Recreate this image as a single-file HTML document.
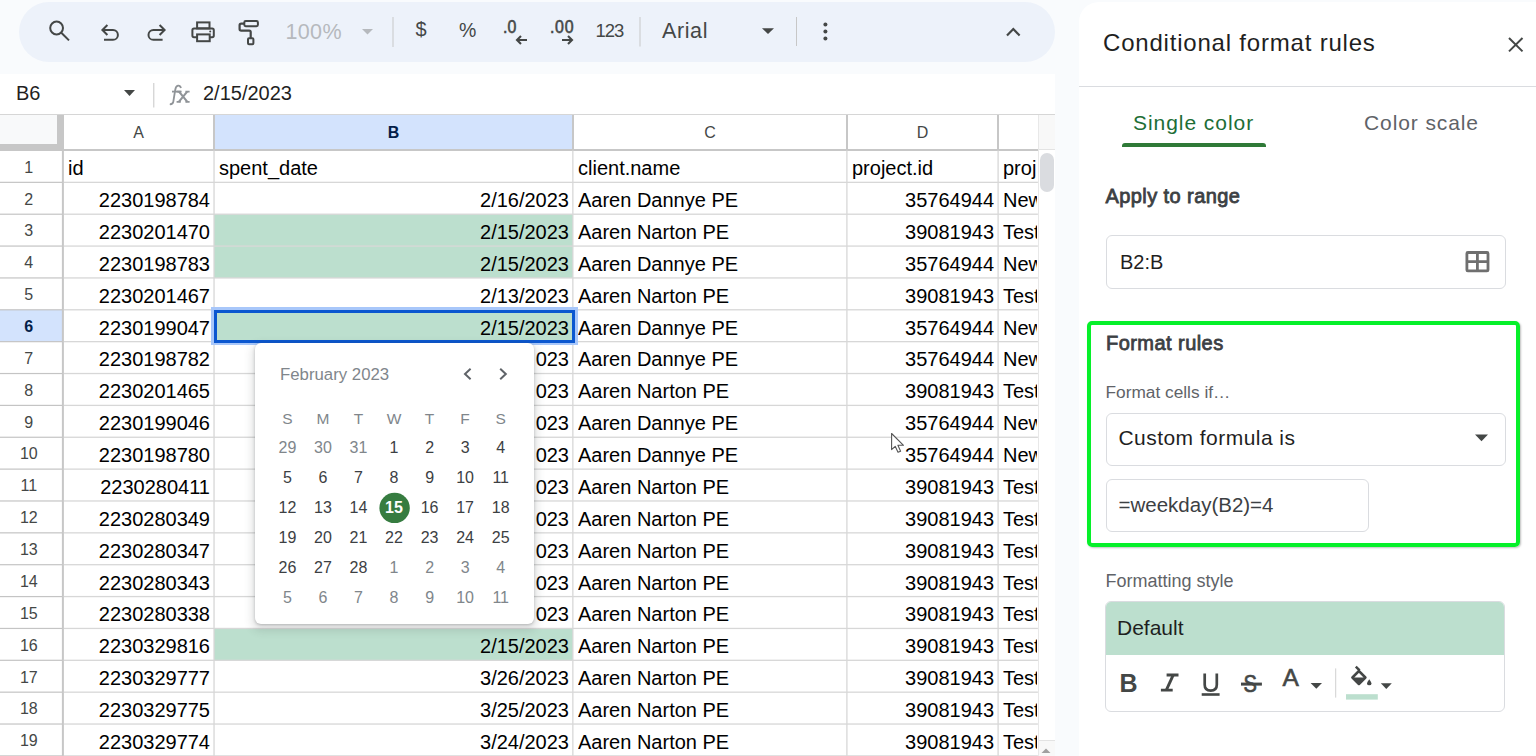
<!DOCTYPE html>
<html><head><meta charset="utf-8"><style>
*{box-sizing:border-box;margin:0;padding:0}
html,body{width:1536px;height:756px;overflow:hidden;background:#f9fbfd;font-family:"Liberation Sans",sans-serif;position:relative}
.a{position:absolute}
.t{position:absolute;white-space:nowrap;line-height:1}
.c{position:absolute;font-size:20px;color:#000;white-space:nowrap;overflow:hidden;line-height:26px;height:26px}
.rn{position:absolute;left:0;width:57.6px;text-align:center;font-size:16px;color:#444746;line-height:16px}
svg{position:absolute;left:0;top:0}
</style></head><body>

<div class="a" style="left:19px;top:2px;width:1036px;height:60px;border-radius:30px;background:#edf2fa"></div>
<div class="a" style="left:0;top:74px;width:1055px;height:41px;background:#fff"></div>
<div class="a" style="left:0;top:115px;width:1038px;height:641px;background:#fff"></div>
<div class="a" style="left:1038px;top:115px;width:17px;height:641px;background:#fff;border-left:1px solid #e8e8e8"></div>
<div class="a" style="left:1039px;top:115px;width:16px;height:35px;background:#f8f8f8;border-bottom:1px solid #e3e3e3"></div>
<div class="a" style="left:1040px;top:153px;width:14px;height:39px;border-radius:7px;background:#dadce0"></div>
<div class="a" style="left:1039px;top:740px;width:16px;height:16px;background:#f8f8f8;border-top:1px solid #e3e3e3"></div>
<svg width="1536" height="756"><polygon points="1041.5,753 1050.5,753 1046,748.5" fill="#a0a0a0"/></svg>
<div class="a" style="left:214px;top:115px;width:359px;height:35px;background:#d3e3fd"></div>
<div class="a" style="left:0;top:115px;width:64px;height:36px;background:#c7c7c7"></div>
<div class="a" style="left:0;top:115px;width:57px;height:29px;background:#f8f9fa"></div>
<div class="a" style="left:0;top:114px;width:1055px;height:1px;background:#d6d6d6"></div>
<div class="a" style="left:64px;top:149px;width:974px;height:2px;background:#c7c7c7"></div>
<div class="a" style="left:213px;top:115px;width:2px;height:35px;background:#c7c7c7"></div>
<div class="a" style="left:572px;top:115px;width:2px;height:35px;background:#c7c7c7"></div>
<div class="a" style="left:846px;top:115px;width:2px;height:35px;background:#c7c7c7"></div>
<div class="a" style="left:997px;top:115px;width:2px;height:35px;background:#c7c7c7"></div>
<div class="t" style="left:63px;width:151px;top:125px;text-align:center;font-size:16px;color:#444746">A</div>
<div class="t" style="left:214px;width:359px;top:125px;text-align:center;font-size:16px;font-weight:bold;color:#041e49">B</div>
<div class="t" style="left:573px;width:274px;top:125px;text-align:center;font-size:16px;color:#444746">C</div>
<div class="t" style="left:847px;width:151px;top:125px;text-align:center;font-size:16px;color:#444746">D</div>
<svg width="1100" height="756" shape-rendering="geometricPrecision"><rect x="214" y="628.44" width="359" height="31.86" fill="#bcdfce"/></svg>
<svg width="1100" height="756" shape-rendering="geometricPrecision"><rect x="214" y="214.21" width="359" height="31.86" fill="#bcdfce"/></svg>
<svg width="1100" height="756" shape-rendering="geometricPrecision"><rect x="214" y="246.07" width="359" height="31.86" fill="#bcdfce"/></svg>
<svg width="1100" height="756" shape-rendering="geometricPrecision"><rect x="214" y="309.80" width="359" height="31.86" fill="#bcdfce"/></svg>
<svg width="1100" height="756" shape-rendering="geometricPrecision"><rect x="0" y="309.80" width="62" height="31.864" fill="#d3e3fd"/></svg>
<svg width="1100" height="756" shape-rendering="geometricPrecision"><rect x="0" y="181.74" width="62" height="1.2" fill="#c4c4c4"/><rect x="63.9" y="181.69" width="974" height="1.3" fill="#d7d7d7"/><rect x="0" y="213.61" width="62" height="1.2" fill="#c4c4c4"/><rect x="63.9" y="213.56" width="974" height="1.3" fill="#d7d7d7"/><rect x="0" y="245.47" width="62" height="1.2" fill="#c4c4c4"/><rect x="63.9" y="245.42" width="974" height="1.3" fill="#d7d7d7"/><rect x="0" y="277.34" width="62" height="1.2" fill="#c4c4c4"/><rect x="63.9" y="277.29" width="974" height="1.3" fill="#d7d7d7"/><rect x="0" y="309.20" width="62" height="1.2" fill="#c4c4c4"/><rect x="63.9" y="309.15" width="974" height="1.3" fill="#d7d7d7"/><rect x="0" y="341.06" width="62" height="1.2" fill="#c4c4c4"/><rect x="63.9" y="341.01" width="974" height="1.3" fill="#d7d7d7"/><rect x="0" y="372.93" width="62" height="1.2" fill="#c4c4c4"/><rect x="63.9" y="372.88" width="974" height="1.3" fill="#d7d7d7"/><rect x="0" y="404.79" width="62" height="1.2" fill="#c4c4c4"/><rect x="63.9" y="404.74" width="974" height="1.3" fill="#d7d7d7"/><rect x="0" y="436.66" width="62" height="1.2" fill="#c4c4c4"/><rect x="63.9" y="436.61" width="974" height="1.3" fill="#d7d7d7"/><rect x="0" y="468.52" width="62" height="1.2" fill="#c4c4c4"/><rect x="63.9" y="468.47" width="974" height="1.3" fill="#d7d7d7"/><rect x="0" y="500.38" width="62" height="1.2" fill="#c4c4c4"/><rect x="63.9" y="500.33" width="974" height="1.3" fill="#d7d7d7"/><rect x="0" y="532.25" width="62" height="1.2" fill="#c4c4c4"/><rect x="63.9" y="532.20" width="974" height="1.3" fill="#d7d7d7"/><rect x="0" y="564.11" width="62" height="1.2" fill="#c4c4c4"/><rect x="63.9" y="564.06" width="974" height="1.3" fill="#d7d7d7"/><rect x="0" y="595.98" width="62" height="1.2" fill="#c4c4c4"/><rect x="63.9" y="595.93" width="974" height="1.3" fill="#d7d7d7"/><rect x="0" y="627.84" width="62" height="1.2" fill="#c4c4c4"/><rect x="63.9" y="627.79" width="974" height="1.3" fill="#d7d7d7"/><rect x="0" y="659.70" width="62" height="1.2" fill="#c4c4c4"/><rect x="63.9" y="659.65" width="974" height="1.3" fill="#d7d7d7"/><rect x="0" y="691.57" width="62" height="1.2" fill="#c4c4c4"/><rect x="63.9" y="691.52" width="974" height="1.3" fill="#d7d7d7"/><rect x="0" y="723.43" width="62" height="1.2" fill="#c4c4c4"/><rect x="63.9" y="723.38" width="974" height="1.3" fill="#d7d7d7"/><rect x="0" y="755.30" width="62" height="1.2" fill="#c4c4c4"/><rect x="63.9" y="755.25" width="974" height="1.3" fill="#d7d7d7"/><rect x="61.9" y="150.5" width="2" height="606" fill="#c7c7c7"/><rect x="213.39" y="150.5" width="1.3" height="606" fill="#d7d7d7"/><rect x="572.20" y="150.5" width="1.3" height="606" fill="#d7d7d7"/><rect x="846.25" y="150.5" width="1.3" height="606" fill="#d7d7d7"/><rect x="997.45" y="150.5" width="1.3" height="606" fill="#d7d7d7"/></svg>
<div class="rn" style="top:159.68px">1</div>
<div class="c" style="left:68px;top:155.28px;width:145px">id</div>
<div class="c" style="left:219px;top:155.28px;width:353px">spent_date</div>
<div class="c" style="left:578px;top:155.28px;width:268px">client.name</div>
<div class="c" style="left:852px;top:155.28px;width:145px">project.id</div>
<div class="c" style="left:1003px;top:155.28px;width:34px">proj</div>
<div class="rn" style="top:191.54px">2</div>
<div class="c" style="left:63px;top:187.14px;width:147px;text-align:right">2230198784</div>
<div class="c" style="left:214px;top:187.14px;width:355px;text-align:right">2/16/2023</div>
<div class="c" style="left:578px;top:187.14px;width:268px">Aaren Dannye PE</div>
<div class="c" style="left:847px;top:187.14px;width:147px;text-align:right">35764944</div>
<div class="c" style="left:1003px;top:187.14px;width:34px">New</div>
<div class="rn" style="top:223.41px">3</div>
<div class="c" style="left:63px;top:219.01px;width:147px;text-align:right">2230201470</div>
<div class="c" style="left:214px;top:219.01px;width:355px;text-align:right">2/15/2023</div>
<div class="c" style="left:578px;top:219.01px;width:268px">Aaren Narton PE</div>
<div class="c" style="left:847px;top:219.01px;width:147px;text-align:right">39081943</div>
<div class="c" style="left:1003px;top:219.01px;width:34px">Test</div>
<div class="rn" style="top:255.27px">4</div>
<div class="c" style="left:63px;top:250.87px;width:147px;text-align:right">2230198783</div>
<div class="c" style="left:214px;top:250.87px;width:355px;text-align:right">2/15/2023</div>
<div class="c" style="left:578px;top:250.87px;width:268px">Aaren Dannye PE</div>
<div class="c" style="left:847px;top:250.87px;width:147px;text-align:right">35764944</div>
<div class="c" style="left:1003px;top:250.87px;width:34px">New</div>
<div class="rn" style="top:287.14px">5</div>
<div class="c" style="left:63px;top:282.74px;width:147px;text-align:right">2230201467</div>
<div class="c" style="left:214px;top:282.74px;width:355px;text-align:right">2/13/2023</div>
<div class="c" style="left:578px;top:282.74px;width:268px">Aaren Narton PE</div>
<div class="c" style="left:847px;top:282.74px;width:147px;text-align:right">39081943</div>
<div class="c" style="left:1003px;top:282.74px;width:34px">Test</div>
<div class="rn" style="top:319.00px;font-weight:bold;color:#041e49">6</div>
<div class="c" style="left:63px;top:314.60px;width:147px;text-align:right">2230199047</div>
<div class="c" style="left:214px;top:314.60px;width:355px;text-align:right">2/15/2023</div>
<div class="c" style="left:578px;top:314.60px;width:268px">Aaren Dannye PE</div>
<div class="c" style="left:847px;top:314.60px;width:147px;text-align:right">35764944</div>
<div class="c" style="left:1003px;top:314.60px;width:34px">New</div>
<div class="rn" style="top:350.86px">7</div>
<div class="c" style="left:63px;top:346.46px;width:147px;text-align:right">2230198782</div>
<div class="c" style="left:214px;top:346.46px;width:355px;text-align:right">023</div>
<div class="c" style="left:578px;top:346.46px;width:268px">Aaren Dannye PE</div>
<div class="c" style="left:847px;top:346.46px;width:147px;text-align:right">35764944</div>
<div class="c" style="left:1003px;top:346.46px;width:34px">New</div>
<div class="rn" style="top:382.73px">8</div>
<div class="c" style="left:63px;top:378.33px;width:147px;text-align:right">2230201465</div>
<div class="c" style="left:214px;top:378.33px;width:355px;text-align:right">023</div>
<div class="c" style="left:578px;top:378.33px;width:268px">Aaren Narton PE</div>
<div class="c" style="left:847px;top:378.33px;width:147px;text-align:right">39081943</div>
<div class="c" style="left:1003px;top:378.33px;width:34px">Test</div>
<div class="rn" style="top:414.59px">9</div>
<div class="c" style="left:63px;top:410.19px;width:147px;text-align:right">2230199046</div>
<div class="c" style="left:214px;top:410.19px;width:355px;text-align:right">023</div>
<div class="c" style="left:578px;top:410.19px;width:268px">Aaren Dannye PE</div>
<div class="c" style="left:847px;top:410.19px;width:147px;text-align:right">35764944</div>
<div class="c" style="left:1003px;top:410.19px;width:34px">New</div>
<div class="rn" style="top:446.46px">10</div>
<div class="c" style="left:63px;top:442.06px;width:147px;text-align:right">2230198780</div>
<div class="c" style="left:214px;top:442.06px;width:355px;text-align:right">023</div>
<div class="c" style="left:578px;top:442.06px;width:268px">Aaren Dannye PE</div>
<div class="c" style="left:847px;top:442.06px;width:147px;text-align:right">35764944</div>
<div class="c" style="left:1003px;top:442.06px;width:34px">New</div>
<div class="rn" style="top:478.32px">11</div>
<div class="c" style="left:63px;top:473.92px;width:147px;text-align:right">2230280411</div>
<div class="c" style="left:214px;top:473.92px;width:355px;text-align:right">023</div>
<div class="c" style="left:578px;top:473.92px;width:268px">Aaren Narton PE</div>
<div class="c" style="left:847px;top:473.92px;width:147px;text-align:right">39081943</div>
<div class="c" style="left:1003px;top:473.92px;width:34px">Test</div>
<div class="rn" style="top:510.18px">12</div>
<div class="c" style="left:63px;top:505.78px;width:147px;text-align:right">2230280349</div>
<div class="c" style="left:214px;top:505.78px;width:355px;text-align:right">023</div>
<div class="c" style="left:578px;top:505.78px;width:268px">Aaren Narton PE</div>
<div class="c" style="left:847px;top:505.78px;width:147px;text-align:right">39081943</div>
<div class="c" style="left:1003px;top:505.78px;width:34px">Test</div>
<div class="rn" style="top:542.05px">13</div>
<div class="c" style="left:63px;top:537.65px;width:147px;text-align:right">2230280347</div>
<div class="c" style="left:214px;top:537.65px;width:355px;text-align:right">023</div>
<div class="c" style="left:578px;top:537.65px;width:268px">Aaren Narton PE</div>
<div class="c" style="left:847px;top:537.65px;width:147px;text-align:right">39081943</div>
<div class="c" style="left:1003px;top:537.65px;width:34px">Test</div>
<div class="rn" style="top:573.91px">14</div>
<div class="c" style="left:63px;top:569.51px;width:147px;text-align:right">2230280343</div>
<div class="c" style="left:214px;top:569.51px;width:355px;text-align:right">023</div>
<div class="c" style="left:578px;top:569.51px;width:268px">Aaren Narton PE</div>
<div class="c" style="left:847px;top:569.51px;width:147px;text-align:right">39081943</div>
<div class="c" style="left:1003px;top:569.51px;width:34px">Test</div>
<div class="rn" style="top:605.78px">15</div>
<div class="c" style="left:63px;top:601.38px;width:147px;text-align:right">2230280338</div>
<div class="c" style="left:214px;top:601.38px;width:355px;text-align:right">023</div>
<div class="c" style="left:578px;top:601.38px;width:268px">Aaren Narton PE</div>
<div class="c" style="left:847px;top:601.38px;width:147px;text-align:right">39081943</div>
<div class="c" style="left:1003px;top:601.38px;width:34px">Test</div>
<div class="rn" style="top:637.64px">16</div>
<div class="c" style="left:63px;top:633.24px;width:147px;text-align:right">2230329816</div>
<div class="c" style="left:214px;top:633.24px;width:355px;text-align:right">2/15/2023</div>
<div class="c" style="left:578px;top:633.24px;width:268px">Aaren Narton PE</div>
<div class="c" style="left:847px;top:633.24px;width:147px;text-align:right">39081943</div>
<div class="c" style="left:1003px;top:633.24px;width:34px">Test</div>
<div class="rn" style="top:669.50px">17</div>
<div class="c" style="left:63px;top:665.10px;width:147px;text-align:right">2230329777</div>
<div class="c" style="left:214px;top:665.10px;width:355px;text-align:right">3/26/2023</div>
<div class="c" style="left:578px;top:665.10px;width:268px">Aaren Narton PE</div>
<div class="c" style="left:847px;top:665.10px;width:147px;text-align:right">39081943</div>
<div class="c" style="left:1003px;top:665.10px;width:34px">Test</div>
<div class="rn" style="top:701.37px">18</div>
<div class="c" style="left:63px;top:696.97px;width:147px;text-align:right">2230329775</div>
<div class="c" style="left:214px;top:696.97px;width:355px;text-align:right">3/25/2023</div>
<div class="c" style="left:578px;top:696.97px;width:268px">Aaren Narton PE</div>
<div class="c" style="left:847px;top:696.97px;width:147px;text-align:right">39081943</div>
<div class="c" style="left:1003px;top:696.97px;width:34px">Test</div>
<div class="rn" style="top:733.23px">19</div>
<div class="c" style="left:63px;top:728.83px;width:147px;text-align:right">2230329774</div>
<div class="c" style="left:214px;top:728.83px;width:355px;text-align:right">3/24/2023</div>
<div class="c" style="left:578px;top:728.83px;width:268px">Aaren Narton PE</div>
<div class="c" style="left:847px;top:728.83px;width:147px;text-align:right">39081943</div>
<div class="c" style="left:1003px;top:728.83px;width:34px">Test</div>
<div class="a" style="left:211px;top:307px;width:367px;height:38px;border:3px solid #a8c7fa"></div>
<div class="a" style="left:214px;top:310px;width:361px;height:32.5px;border:3px solid #0b57d0"></div>
<svg width="1100" height="120" fill="none" stroke="#444746" stroke-width="2">
<circle cx="56.6" cy="28" r="6.4"/>
<path d="M61.3,32.7 L69,40.4"/>
<path d="M107.4,25 L102.4,30 L107.4,35 M102.4,30 H113 A4.9,4.9 0 0 1 113,39.8 H104"/>
<path d="M159.6,25 L164.6,30 L159.6,35 M164.6,30 H153.4 A4.9,4.9 0 0 0 153.4,39.8 H162.6"/>
<rect x="197.1" y="22.4" width="12.4" height="6" />
<rect x="192.4" y="28.6" width="21.4" height="8.6" rx="1.6"/>
<rect x="197.1" y="34.4" width="12.6" height="6.8" fill="#edf2fa"/>
<circle cx="210.2" cy="31.6" r="1" fill="#444746" stroke="none"/>
<rect x="244.3" y="21" width="13.6" height="5.2" rx="1.4"/>
<path d="M244.3,23.6 H241.2 Q239.6,23.6 239.6,25.2 V29 Q239.6,30.6 241.2,30.6 H249.2 Q250.7,30.6 250.7,32 V38" stroke-width="2.2"/>
<rect x="248" y="38.2" width="5.4" height="6" rx="1"/>
<polyline points="1007,35.5 1013.3,29 1019.6,35.5" stroke-width="2.2"/>
<polygon points="362,29 373,29 367.5,34.6" fill="#b6b9bd" stroke="none"/>
<rect x="392.5" y="17" width="1" height="30" fill="#c7c7c7" stroke="none"/>
<rect x="639.5" y="17" width="1" height="29.5" fill="#c7c7c7" stroke="none"/>
<polygon points="762,28.3 774,28.3 768,34" fill="#444746" stroke="none"/>
<rect x="796" y="17" width="1" height="29" fill="#c7c7c7" stroke="none"/>
<circle cx="825.4" cy="24.6" r="2" fill="#444746" stroke="none"/>
<circle cx="825.4" cy="31.6" r="2" fill="#444746" stroke="none"/>
<circle cx="825.4" cy="38.6" r="2" fill="#444746" stroke="none"/>
<path d="M527,40 H517 M521,36 L517,40 L521,44" stroke-width="2.1"/>
<path d="M562,40 H572 M568,36 L572,40 L568,44" stroke-width="2.1"/>
<polygon points="124,90 135,90 129.5,96" fill="#444746" stroke="none"/>
<rect x="153.3" y="83" width="1" height="24.5" fill="#c7c7c7" stroke="none"/>
<g stroke="#909498" stroke-width="1.8">
<path d="M181,88 Q180.2,85.3 178,85.6 Q175.8,86 175.2,90 L173.4,101.2 Q172.7,104.6 169.8,104.2"/>
<path d="M172,91.6 H181.6"/>
<path d="M176.6,91.6 H180.8 M185.4,91.6 H189.6 M176.6,101.8 H180.8 M185.4,101.8 H189.6"/>
<path d="M179,91.6 L187.4,101.8 M187.2,91.6 L178.8,101.8" stroke-width="2.1"/>
</g>
</svg>
<div class="t" style="left:285.5px;top:22.00px;font-size:21.5px;color:#b6b9bd;letter-spacing:0.35px">100%</div>
<div class="t" style="left:415.5px;top:19.47px;font-size:20px;color:#444746">$</div>
<div class="t" style="left:459px;top:20.69px;font-size:19.5px;color:#444746">%</div>
<div class="a" style="left:503px;top:0;transform:scaleX(0.86);transform-origin:0 0"><div class="t" style="left:0px;top:17.94px;font-size:18.5px;color:#444746;-webkit-text-stroke:0.6px #444746">.0</div></div>
<div class="a" style="left:549.5px;top:0;transform:scaleX(0.86);transform-origin:0 0"><div class="t" style="left:0px;top:17.94px;font-size:18.5px;color:#444746;letter-spacing:0.8px;-webkit-text-stroke:0.6px #444746">.00</div></div>
<div class="t" style="left:595.5px;top:21.54px;font-size:18.5px;color:#444746;letter-spacing:-1px">123</div>
<div class="t" style="left:662px;top:21.20px;font-size:21.5px;color:#444746;letter-spacing:0.6px">Arial</div>
<div class="t" style="left:16px;top:83.27px;font-size:20px;color:#1f1f1f">B6</div>
<div class="t" style="left:203px;top:83.27px;font-size:20px;color:#1f1f1f">2/15/2023</div>
<div class="a" style="left:1079px;top:2px;width:457px;height:754px;background:#fff;border-top-left-radius:20px"></div>
<div class="a" style="left:1079px;top:86px;width:457px;height:1px;background:#dadce0"></div>
<div class="t" style="left:1103px;top:31.08px;font-size:24px;letter-spacing:0.8px;color:#1f1f1f">Conditional format rules</div>
<svg width="1536" height="120"><path d="M1509,38 L1522.5,51.4 M1522.5,38 L1509,51.4" stroke="#444746" stroke-width="2" fill="none"/></svg>
<div class="t" style="left:1133px;top:111.82px;font-size:21px;letter-spacing:0.95px;color:#1d6e36">Single color</div>
<div class="a" style="left:1121.5px;top:142.5px;width:144px;height:4px;background:#2f7a37;border-radius:3px 3px 0 0"></div>
<div class="t" style="left:1364px;top:111.82px;font-size:21px;letter-spacing:0.9px;color:#5f6368">Color scale</div>
<div class="t" style="left:1105.5px;top:185.97px;font-size:20px;letter-spacing:0.42px;color:#3c4043;-webkit-text-stroke:0.8px #3c4043">Apply to range</div>
<div class="a" style="left:1105.5px;top:235px;width:400px;height:53.5px;border:1px solid #dadce0;border-radius:6px"></div>
<div class="t" style="left:1120px;top:252.37px;font-size:20px;color:#1f1f1f">B2:B</div>
<svg width="1536" height="300"><g fill="none" stroke="#6f6f6f" stroke-width="2.8"><rect x="1466.9" y="252.5" width="21.1" height="18.4" rx="1"/><path d="M1477.4,252.5 V270.9 M1466.9,261.7 H1488"/></g></svg>
<div class="a" style="left:1087px;top:321px;width:433px;height:225.6px;border:4.5px solid #06f02a;border-radius:5px;box-shadow:1px 1px 2px rgba(0,0,0,0.25)"></div>
<div class="t" style="left:1106px;top:333.47px;font-size:20px;letter-spacing:0.45px;color:#3c4043;-webkit-text-stroke:0.8px #3c4043">Format rules</div>
<div class="t" style="left:1105.5px;top:383.56px;font-size:17.3px;color:#5f6368">Format cells if…</div>
<div class="a" style="left:1106px;top:412.5px;width:399.5px;height:53px;border:1px solid #dadce0;border-radius:6px"></div>
<div class="t" style="left:1118.5px;top:426.82px;font-size:21px;letter-spacing:0.45px;color:#1f1f1f">Custom formula is</div>
<svg width="1536" height="756"><polygon points="1475,434.5 1488,434.5 1481.5,441.2" fill="#444746"/></svg>
<div class="a" style="left:1106px;top:478.5px;width:262.5px;height:53px;border:1px solid #dadce0;border-radius:6px"></div>
<div class="t" style="left:1118.5px;top:495.35px;font-size:20.5px;color:#3c4043">=weekday(B2)=4</div>
<div class="t" style="left:1105.5px;top:571.66px;font-size:18px;color:#5f6368">Formatting style</div>
<div class="a" style="left:1105px;top:600.5px;width:400px;height:111px;border:1px solid #dadce0;border-radius:6px;overflow:hidden"><div class="a" style="left:0;top:0;width:400px;height:53px;background:#bcdfce"></div></div>
<div class="t" style="left:1117px;top:616.92px;font-size:21px;color:#1f1f1f">Default</div>
<svg width="1536" height="756">
<text x="1119.4" y="691.5" font-family="Liberation Sans" font-weight="bold" font-size="25" fill="#444746">B</text>
<g fill="none" stroke="#444746">
<path d="M1166.6,675 H1178.5 M1160.9,690.1 H1172.7" stroke-width="2.8"/>
<path d="M1173,675.5 L1166.6,689.5" stroke-width="3"/>
<path d="M1204.7,673.6 V684.8 Q1204.7,690.6 1210.75,690.6 Q1216.8,690.6 1216.8,684.8 V673.6" stroke-width="2.7"/>
<path d="M1352.4,677.5 L1358.9,671 L1365.4,677.5 L1358.9,684 Z" stroke-width="2.5" stroke-linejoin="round"/>
<path d="M1355.8,666.6 L1359.6,670.4" stroke-width="2.5"/>
</g>
<rect x="1201.7" y="693.2" width="17.9" height="2.6" fill="#444746"/>
<text transform="translate(1243.6,692) scale(0.82,1)" font-family="Liberation Sans" font-size="24.5" fill="#444746" stroke="#444746" stroke-width="0.7">S</text>
<rect x="1241" y="682.6" width="20.9" height="3" fill="#444746"/>
<text x="1282.4" y="685.8" font-family="Liberation Sans" font-size="24.5" fill="#444746" stroke="#444746" stroke-width="0.6">A</text>
<polygon points="1310.6,683 1322,683 1316.3,688.7" fill="#444746"/>
<rect x="1335.2" y="668.4" width="1" height="29.2" fill="#d0d0d0"/>
<polygon points="1351.5,677.5 1366.3,677.5 1358.9,684.9" fill="#444746"/>
<path d="M1369.2,679.3 Q1367,682.5 1367,683.4 Q1367,685.3 1369.2,685.3 Q1371.5,685.3 1371.5,683.4 Q1371.5,682.5 1369.2,679.3 Z" fill="#444746"/>
<rect x="1346" y="694.2" width="31.8" height="5.4" fill="#bcdfce"/>
<polygon points="1380.8,683.2 1391.8,683.2 1386.3,688.9" fill="#444746"/>
</svg>
<div class="a" style="left:255px;top:343px;width:279px;height:281px;background:#fff;border-radius:6px;box-shadow:0 1px 3px rgba(60,64,67,0.3),0 4px 8px 3px rgba(60,64,67,0.15)"></div>
<div class="t" style="left:280px;top:366.78px;font-size:16.8px;color:#80868b">February 2023</div>
<svg width="600" height="700"><g fill="none" stroke="#5f6368" stroke-width="2"><polyline points="470.6,368.8 465,374 470.6,379.2"/><polyline points="500.2,368.8 505.8,374 500.2,379.2"/></g><circle cx="394.6" cy="507.9" r="15.2" fill="#367c40"/></svg>
<div class="t" style="left:267.4px;width:40px;text-align:center;top:410.78px;font-size:15.5px;color:#80868b">S</div>
<div class="t" style="left:302.9px;width:40px;text-align:center;top:410.78px;font-size:15.5px;color:#80868b">M</div>
<div class="t" style="left:338.5px;width:40px;text-align:center;top:410.78px;font-size:15.5px;color:#80868b">T</div>
<div class="t" style="left:374.0px;width:40px;text-align:center;top:410.78px;font-size:15.5px;color:#80868b">W</div>
<div class="t" style="left:409.6px;width:40px;text-align:center;top:410.78px;font-size:15.5px;color:#80868b">T</div>
<div class="t" style="left:445.1px;width:40px;text-align:center;top:410.78px;font-size:15.5px;color:#80868b">F</div>
<div class="t" style="left:480.7px;width:40px;text-align:center;top:410.78px;font-size:15.5px;color:#80868b">S</div>
<div class="t" style="left:267.4px;width:40px;text-align:center;top:440.26px;font-size:16px;color:#80868b">29</div>
<div class="t" style="left:302.9px;width:40px;text-align:center;top:440.26px;font-size:16px;color:#80868b">30</div>
<div class="t" style="left:338.5px;width:40px;text-align:center;top:440.26px;font-size:16px;color:#80868b">31</div>
<div class="t" style="left:374.0px;width:40px;text-align:center;top:440.26px;font-size:16px;color:#3c4043">1</div>
<div class="t" style="left:409.6px;width:40px;text-align:center;top:440.26px;font-size:16px;color:#3c4043">2</div>
<div class="t" style="left:445.1px;width:40px;text-align:center;top:440.26px;font-size:16px;color:#3c4043">3</div>
<div class="t" style="left:480.7px;width:40px;text-align:center;top:440.26px;font-size:16px;color:#3c4043">4</div>
<div class="t" style="left:267.4px;width:40px;text-align:center;top:470.20px;font-size:16px;color:#3c4043">5</div>
<div class="t" style="left:302.9px;width:40px;text-align:center;top:470.20px;font-size:16px;color:#3c4043">6</div>
<div class="t" style="left:338.5px;width:40px;text-align:center;top:470.20px;font-size:16px;color:#3c4043">7</div>
<div class="t" style="left:374.0px;width:40px;text-align:center;top:470.20px;font-size:16px;color:#3c4043">8</div>
<div class="t" style="left:409.6px;width:40px;text-align:center;top:470.20px;font-size:16px;color:#3c4043">9</div>
<div class="t" style="left:445.1px;width:40px;text-align:center;top:470.20px;font-size:16px;color:#3c4043">10</div>
<div class="t" style="left:480.7px;width:40px;text-align:center;top:470.20px;font-size:16px;color:#3c4043">11</div>
<div class="t" style="left:267.4px;width:40px;text-align:center;top:500.14px;font-size:16px;color:#3c4043">12</div>
<div class="t" style="left:302.9px;width:40px;text-align:center;top:500.14px;font-size:16px;color:#3c4043">13</div>
<div class="t" style="left:338.5px;width:40px;text-align:center;top:500.14px;font-size:16px;color:#3c4043">14</div>
<div class="t" style="left:374.0px;width:40px;text-align:center;top:500.14px;font-size:16px;color:#fff;font-weight:bold">15</div>
<div class="t" style="left:409.6px;width:40px;text-align:center;top:500.14px;font-size:16px;color:#3c4043">16</div>
<div class="t" style="left:445.1px;width:40px;text-align:center;top:500.14px;font-size:16px;color:#3c4043">17</div>
<div class="t" style="left:480.7px;width:40px;text-align:center;top:500.14px;font-size:16px;color:#3c4043">18</div>
<div class="t" style="left:267.4px;width:40px;text-align:center;top:530.08px;font-size:16px;color:#3c4043">19</div>
<div class="t" style="left:302.9px;width:40px;text-align:center;top:530.08px;font-size:16px;color:#3c4043">20</div>
<div class="t" style="left:338.5px;width:40px;text-align:center;top:530.08px;font-size:16px;color:#3c4043">21</div>
<div class="t" style="left:374.0px;width:40px;text-align:center;top:530.08px;font-size:16px;color:#3c4043">22</div>
<div class="t" style="left:409.6px;width:40px;text-align:center;top:530.08px;font-size:16px;color:#3c4043">23</div>
<div class="t" style="left:445.1px;width:40px;text-align:center;top:530.08px;font-size:16px;color:#3c4043">24</div>
<div class="t" style="left:480.7px;width:40px;text-align:center;top:530.08px;font-size:16px;color:#3c4043">25</div>
<div class="t" style="left:267.4px;width:40px;text-align:center;top:560.02px;font-size:16px;color:#3c4043">26</div>
<div class="t" style="left:302.9px;width:40px;text-align:center;top:560.02px;font-size:16px;color:#3c4043">27</div>
<div class="t" style="left:338.5px;width:40px;text-align:center;top:560.02px;font-size:16px;color:#3c4043">28</div>
<div class="t" style="left:374.0px;width:40px;text-align:center;top:560.02px;font-size:16px;color:#80868b">1</div>
<div class="t" style="left:409.6px;width:40px;text-align:center;top:560.02px;font-size:16px;color:#80868b">2</div>
<div class="t" style="left:445.1px;width:40px;text-align:center;top:560.02px;font-size:16px;color:#80868b">3</div>
<div class="t" style="left:480.7px;width:40px;text-align:center;top:560.02px;font-size:16px;color:#80868b">4</div>
<div class="t" style="left:267.4px;width:40px;text-align:center;top:589.96px;font-size:16px;color:#80868b">5</div>
<div class="t" style="left:302.9px;width:40px;text-align:center;top:589.96px;font-size:16px;color:#80868b">6</div>
<div class="t" style="left:338.5px;width:40px;text-align:center;top:589.96px;font-size:16px;color:#80868b">7</div>
<div class="t" style="left:374.0px;width:40px;text-align:center;top:589.96px;font-size:16px;color:#80868b">8</div>
<div class="t" style="left:409.6px;width:40px;text-align:center;top:589.96px;font-size:16px;color:#80868b">9</div>
<div class="t" style="left:445.1px;width:40px;text-align:center;top:589.96px;font-size:16px;color:#80868b">10</div>
<div class="t" style="left:480.7px;width:40px;text-align:center;top:589.96px;font-size:16px;color:#80868b">11</div>
<svg style="left:888px;top:430px" width="20" height="26"><path d="M3.6,3.5 V19.6 L7.2,16.3 L10,22.3 L12.6,21.2 L9.9,15.3 L15.5,15.3 Z" fill="#fff" stroke="#555" stroke-width="1.1" stroke-linejoin="round"/></svg>
</body></html>
